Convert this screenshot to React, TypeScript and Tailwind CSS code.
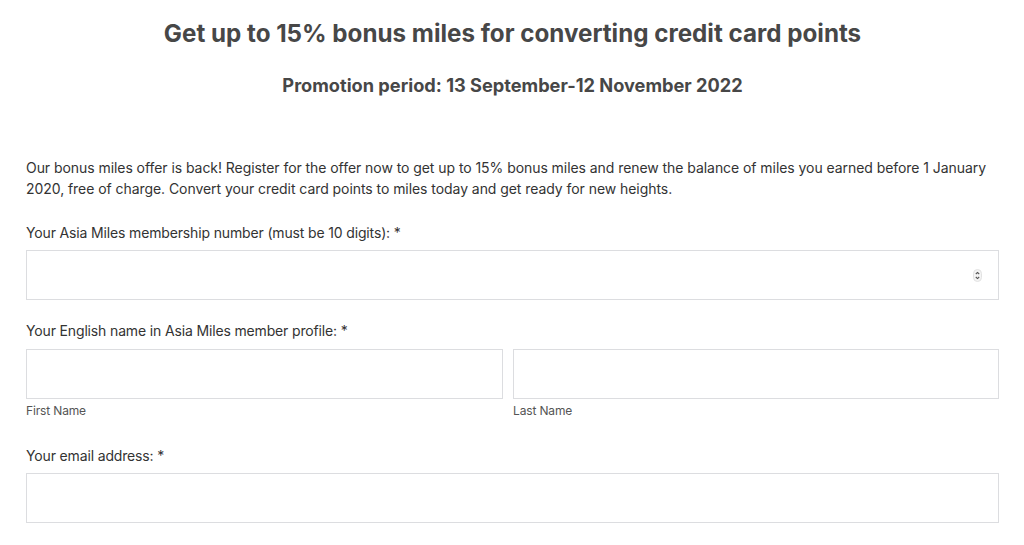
export default function App() {
  return (
    <div className="min-h-screen bg-white pl-[26px] pr-[25px] pt-[19px] font-['Inter',sans-serif] text-[#333] tracking-[-0.15px]">
      <h1 className="text-center text-[24.2px] font-bold leading-[30px] tracking-normal text-[#474747]">
        Get up to 15% bonus miles for converting credit card points
      </h1>
      <h2 className="mt-[24px] text-center text-[18.2px] font-bold leading-[24px] tracking-normal text-[#474747]">
        Promotion period: 13 September-12 November 2022
      </h2>

      <p className="mt-[60px] text-[14px] leading-[21px] tracking-[-0.06px]">
        Our bonus miles offer is back! Register for the offer now to get up to 15% bonus miles and renew the balance of miles you earned before 1 January 2020, free of charge. Convert your credit card points to miles today and get ready for new heights.
      </p>

      <label className="mt-[24px] block text-[14px] leading-[20px]">
        Your Asia Miles membership number (must be 10 digits): *
      </label>
      <div className="mt-[7px] flex h-[50px] items-center justify-end border border-[#dcdde0] pr-[16px]">
        <svg width="9" height="13" viewBox="0 0 9 13" className="text-[#555]">
          <rect x="0.5" y="0.5" width="8" height="12" rx="4" fill="#f4f4f4" stroke="#e2e2e2" />
          <path d="M2.8 5 L4.5 3.4 L6.2 5" fill="none" stroke="currentColor" strokeWidth="1.1" />
          <path d="M2.8 8 L4.5 9.6 L6.2 8" fill="none" stroke="currentColor" strokeWidth="1.1" />
        </svg>
      </div>

      <label className="mt-[21px] block text-[14px] leading-[20px]">
        Your English name in Asia Miles member profile: *
      </label>
      <div className="mt-[8px] flex gap-[10px]">
        <div className="w-[477px]">
          <div className="h-[50px] border border-[#dcdde0]" />
          <div className="mt-[4px] text-[12px] leading-[16px] text-[#555]">First Name</div>
        </div>
        <div className="flex-1">
          <div className="h-[50px] border border-[#dcdde0]" />
          <div className="mt-[4px] text-[12px] leading-[16px] text-[#555]">Last Name</div>
        </div>
      </div>

      <label className="mt-[27px] block text-[14px] leading-[20px]">
        Your email address: *
      </label>
      <div className="mt-[7px] h-[50px] border border-[#dcdde0]" />
    </div>
  )
}
